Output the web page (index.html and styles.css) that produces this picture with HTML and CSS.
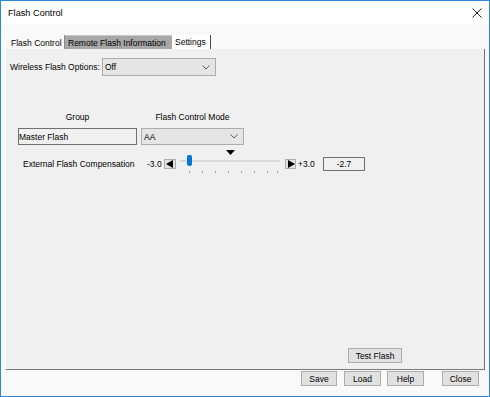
FILE: index.html
```html
<!DOCTYPE html>
<html>
<head>
<meta charset="utf-8">
<link rel="stylesheet" href="styles.css">
</head>
<body>
<div class="window">
  <div class="titlebar">
    <span class="title">Flash Control</span>
    <svg class="close" width="10" height="10" viewBox="0 0 10 10"><path d="M0.5 0.5 L9.5 9.5 M9.5 0.5 L0.5 9.5" stroke="#222" stroke-width="1" fill="none"/></svg>
  </div>
  <div class="body">
    <div class="tabs">
      <div class="tab tab-sel">Flash Control</div>
      <div class="tab tab-gray">Remote Flash Information</div>
      <div class="tab tab-white">Settings</div>
    </div>
    <div class="panel">
      <div class="row-wireless">
        <span class="lbl-wireless">Wireless Flash Options:</span>
        <div class="select sel-wireless"><span>Off</span>
          <svg class="chev" width="8" height="5" viewBox="0 0 8 5"><path d="M0.5 0.5 L4 4 L7.5 0.5" stroke="#606060" fill="none" stroke-width="1"/></svg>
        </div>
      </div>
      <div class="row-head">
        <div class="cell-group">Group</div>
        <div class="cell-mode">Flash Control Mode</div>
      </div>
      <div class="row-master">
        <div class="textbox">Master Flash</div>
        <div class="select sel-mode"><span>AA</span>
          <svg class="chev" width="8" height="5" viewBox="0 0 8 5"><path d="M0.5 0.5 L4 4 L7.5 0.5" stroke="#606060" fill="none" stroke-width="1"/></svg>
        </div>
      </div>
      <div class="row-comp">
        <span class="lbl-comp">External Flash Compensation</span>
        <span class="minv">-3.0</span>
        <div class="arrbtn arr-left"><svg width="8" height="8" viewBox="0 0 8 8"><path d="M7 0 L7 8 L0 4 Z" fill="#000"/></svg></div>
        <div class="slider">
          <div class="marker-row"><svg width="9" height="5" viewBox="0 0 9 5"><path d="M0 0 L9 0 L4.5 5 Z" fill="#000"/></svg></div>
          <div class="track"><div class="thumb"></div></div>
          <div class="ticks">
            <i></i><i></i><i></i><i></i><i></i><i></i><i></i><i class="last"></i>
          </div>
        </div>
        <div class="arrbtn arr-right"><svg width="8" height="8" viewBox="0 0 8 8"><path d="M1 0 L1 8 L8 4 Z" fill="#000"/></svg></div>
        <span class="maxv">+3.0</span>
        <div class="valbox">-2.7</div>
      </div>
      <div class="row-test">
        <div class="btn btn-test">Test Flash</div>
      </div>
    </div>
    <div class="buttons">
      <div class="btn b-save">Save</div>
      <div class="btn b-load">Load</div>
      <div class="btn b-help">Help</div>
      <div class="btn b-close">Close</div>
    </div>
  </div>
</div>
</body>
</html>
```
FILE: styles.css
```css
html, body {
  margin: 0;
  padding: 0;
  background: #ffffff;
}
body {
  font-family: "Liberation Sans", Arial, sans-serif;
  font-size: 8.5px;
  color: #000;
}
.window {
  width: 490px;
  height: 397px;
  box-sizing: border-box;
  border: 1px solid #2b8ad8;
  display: flex;
  flex-direction: column;
  background: #f9f9f9;
}
.titlebar {
  height: 23px;
  flex: none;
  background: #ffffff;
  display: flex;
  align-items: center;
  padding-left: 7px;
  padding-right: 7px;
}
.title {
  font-size: 9.2px;
  color: #000;
  flex: 1;
}
.close {
  display: block;
  margin-right: 0px;
}
.body {
  flex: 1;
  display: flex;
  flex-direction: column;
  padding: 11px 4px 0 4px;
  background: #f9f9f9;
}
.tabs {
  display: flex;
  height: 14px;
  flex: none;
}
.tab {
  display: flex;
  align-items: center;
  height: 14px;
  box-sizing: border-box;
  white-space: nowrap;
}
.tab-sel {
  width: 60px;
  padding-left: 5px;
  background: #f9f9f9;
  border-left: 1px solid #ffffff;
  border-right: 1px solid #8a8a8a;
  padding-top: 1px;
}
.tab-gray {
  width: 107px;
  padding-left: 3px;
  background: #a7a7a7;
  border-top: 1px solid #c8c8c8;
}
.tab-white {
  width: 39px;
  padding-left: 3px;
  background: #ffffff;
  border-right: 1px solid #4a4a4a;
}
.panel {
  height: 321px;
  flex: none;
  box-sizing: border-box;
  background: #f0f0f0;
  border-right: 1px solid #6f6f6f;
  border-bottom: 1px solid #7a7a7a;
  border-left: 1px solid #fbfbfb;
  display: flex;
  flex-direction: column;
  padding: 9px 0 6px 0;
}
.row-wireless {
  display: flex;
  align-items: center;
  height: 18px;
  margin-left: 4px;
}
.lbl-wireless {
  width: 92px;
  white-space: nowrap;
}
.select {
  box-sizing: border-box;
  background: #e5e5e5;
  border: 1px solid #acacac;
  display: flex;
  align-items: center;
  justify-content: space-between;
  padding: 0 5px 0 2px;
}
.sel-wireless {
  width: 114px;
  height: 18px;
}
.row-head {
  display: flex;
  margin-top: 35px;
  height: 12px;
  margin-left: 12px;
  align-items: center;
}
.cell-group {
  width: 119px;
  text-align: center;
}
.cell-mode {
  width: 103px;
  margin-left: 4px;
  text-align: center;
}
.row-master {
  display: flex;
  margin-top: 5px;
  height: 17px;
  margin-left: 12px;
}
.textbox {
  width: 119px;
  height: 17px;
  box-sizing: border-box;
  border: 1px solid #707070;
  background: #f0f0f0;
  display: flex;
  align-items: center;
  padding-left: 0px;
}
.sel-mode {
  width: 103px;
  height: 17px;
  margin-left: 4px;
}
.row-comp {
  display: flex;
  align-items: center;
  height: 28px;
  margin-top: 5px;
  margin-left: 17px;
}
.lbl-comp {
  width: 124px;
  white-space: nowrap;
}
.minv {
  width: 16px;
}
.arrbtn {
  box-sizing: border-box;
  height: 10px;
  background: #e1e1e1;
  border: 1px solid #adadad;
  display: flex;
  align-items: center;
  justify-content: center;
}
.arr-left {
  width: 12px;
  margin-left: 1px;
}
.arr-right {
  width: 11px;
}
.slider {
  width: 109px;
  height: 28px;
  display: flex;
  flex-direction: column;
}
.marker-row {
  height: 5px;
  padding-left: 50px;
  display: flex;
}
.marker-row svg {
  display: block;
}
.track {
  height: 11px;
  margin: 0 5px 0 4px;
  display: flex;
  background: linear-gradient(to bottom, transparent 5px, #d9d9d9 5px, #d9d9d9 7px, transparent 7px);
}
.thumb {
  width: 5px;
  height: 11px;
  margin-left: 7px;
  background: #0078d7;
  border-radius: 2px 2px 3px 3px;
}
.ticks {
  display: flex;
  margin-top: 5px;
  margin-left: 13px;
  height: 2px;
  gap: 12px;
}
.ticks i {
  display: block;
  width: 1px;
  height: 2px;
  background: #a0a0a0;
}
.ticks i.last {
  margin-left: -3px;
}
.maxv {
  margin-left: 2px;
  width: 18px;
}
.valbox {
  box-sizing: border-box;
  width: 42px;
  height: 14px;
  margin-left: 7px;
  border: 1px solid #707070;
  background: #f0f0f0;
  display: flex;
  align-items: center;
  justify-content: center;
}
.row-test {
  margin-top: auto;
  display: flex;
  justify-content: flex-end;
  padding-right: 82px;
}
.btn {
  box-sizing: border-box;
  height: 15px;
  background: #e1e1e1;
  border: 1px solid #adadad;
  display: flex;
  align-items: center;
  justify-content: center;
}
.btn-test {
  width: 54px;
}
.buttons {
  display: flex;
  justify-content: flex-end;
  margin-top: 1px;
  padding-right: 6px;
}
.b-save { width: 36px; }
.b-load { width: 37px; margin-left: 7px; }
.b-help { width: 37px; margin-left: 6px; }
.b-close { width: 37px; margin-left: 18px; }
```
